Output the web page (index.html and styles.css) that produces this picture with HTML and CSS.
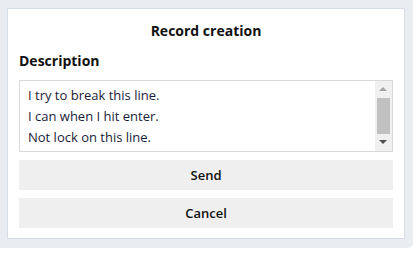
FILE: index.html
```
<!DOCTYPE html>
<html>
<head>
<meta charset="utf-8">
<link rel="stylesheet" href="styles.css">
</head>
<body>
<div class="frame">
  <div class="card">
    <h1 class="title">Record creation</h1>
    <label class="label" for="desc">Description</label>
    <div class="field">
      <textarea id="desc" class="input">I try to break this line.
I can when I hit enter.
Not lock on this line.</textarea>
      <div class="scrollbar">
        <div class="arrow up"></div>
        <div class="track"><div class="thumb"></div></div>
        <div class="arrow down"></div>
      </div>
    </div>
    <button class="btn">Send</button>
    <button class="btn">Cancel</button>
  </div>
</div>
</body>
</html>
```

FILE: styles.css
```
html, body {
  margin: 0;
  padding: 0;
  background: #ffffff;
}
body {
  font-family: "Open Sans", "Noto Sans", sans-serif;
  color: #111;
}
.frame {
  width: 413px;
  height: 248px;
  box-sizing: border-box;
  background: #e9edf1;
  border-radius: 0 0 5px 0;
  padding: 8px 8px 9px 7px;
}
.card {
  box-sizing: border-box;
  height: 231px;
  background: #fff;
  border: 1px solid #d5dee6;
  padding: 0 11px;
  display: flex;
  flex-direction: column;
}
.title {
  margin: 0;
  font-size: 14px;
  font-weight: 700;
  text-align: center;
  line-height: 20px;
  padding-top: 12px;
}
.label {
  font-size: 14px;
  font-weight: 700;
  line-height: 20px;
  margin-top: 10px;
  margin-bottom: 9px;
}
.field {
  display: flex;
  height: 72px;
  box-sizing: border-box;
  border: 1px solid #d9d9d9;
}
.input {
  flex: 1;
  border: none;
  outline: none;
  resize: none;
  overflow: hidden;
  margin: 0;
  padding: 4px 8px;
  font-family: inherit;
  font-size: 13px;
  line-height: 21px;
  color: #1b1b3a;
}
.scrollbar {
  width: 17px;
  background: #f0f0f0;
  display: flex;
  flex-direction: column;
}
.arrow {
  height: 17px;
  position: relative;
}
.arrow::after {
  content: "";
  position: absolute;
  left: 4px;
  top: 6px;
  border-left: 4px solid transparent;
  border-right: 4px solid transparent;
}
.arrow.up::after {
  border-bottom: 4px solid #a3a3a3;
}
.arrow.down::after {
  border-top: 4px solid #505050;
}
.track {
  flex: 1;
  display: flex;
  padding: 0 2px;
}
.thumb {
  flex: 1;
  background: #c1c1c1;
}
.btn {
  margin-top: 8px;
  height: 30px;
  border: none;
  background: #efefef;
  font-family: inherit;
  font-size: 13px;
  font-weight: 600;
  color: #111;
  padding: 0;
}
```
